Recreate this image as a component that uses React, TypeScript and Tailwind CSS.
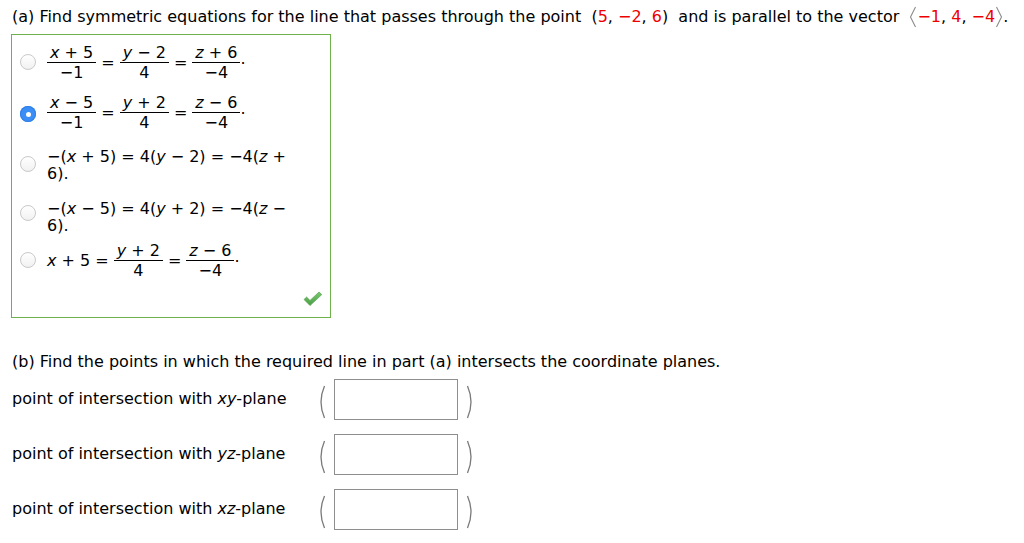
import React from "react";

const I = ({ children }: { children: React.ReactNode }) => (
  <span className="italic">{children}</span>
);

const R = ({ children }: { children: React.ReactNode }) => (
  <span className="text-[#ee0000]">{children}</span>
);

const Frac = ({ n, d }: { n: React.ReactNode; d: React.ReactNode }) => (
  <span className="inline-flex flex-col items-center">
    <span className="px-[3px] leading-[18px] border-b border-black whitespace-pre">{n}</span>
    <span className="px-[3px] leading-[20px] whitespace-pre">{d}</span>
  </span>
);

const Eq = () => <span className="px-[5px] leading-[18px] mb-[1px]">=</span>;

const Dot = () => <span className="leading-[18px] mb-[9px]">.</span>;

const Radio = ({ checked, className = "" }: { checked?: boolean; className?: string }) =>
  checked ? (
    <span
      className={`w-[16px] h-[16px] rounded-full bg-[#3a8ef5] flex items-center justify-center shrink-0 shadow-[inset_0_0_0_1px_#2f7fe6] ${className}`}
    >
      <span className="w-[5px] h-[5px] rounded-full bg-white" />
    </span>
  ) : (
    <span
      className={`w-[16px] h-[16px] rounded-full border border-[#c9c9c9] bg-gradient-to-b from-white to-[#f1f1f1] shrink-0 ${className}`}
    />
  );

const Angle = ({ right }: { right?: boolean }) => (
  <svg width="8" height="22" viewBox="0 0 8 22" className="inline-block align-middle">
    <path
      d={right ? "M1.5 1 L6.5 11 L1.5 21" : "M6.5 1 L1.5 11 L6.5 21"}
      fill="none"
      stroke="#8a8a8a"
      strokeWidth="1.1"
    />
  </svg>
);

const Paren = ({ right }: { right?: boolean }) => (
  <svg width="9" height="34" viewBox="0 0 9 34" className="shrink-0 mt-[4px]">
    <path
      d={right ? "M1.5 1 Q8.5 17 1.5 33" : "M7.5 1 Q0.5 17 7.5 33"}
      fill="none"
      stroke="#7a7a7a"
      strokeWidth="1.3"
    />
  </svg>
);

const Row = ({ label, className }: { label: React.ReactNode; className: string }) => (
  <div className={`flex items-center h-[41px] ${className}`}>
    <div className="w-[306px] pl-px whitespace-nowrap mb-[1px]">point of intersection with {label}-plane</div>
    <Paren />
    <div className="ml-[8px] w-[124px] h-[41px] border border-[#8e8e8e] bg-white" />
    <div className="ml-[8px]">
      <Paren right />
    </div>
  </div>
);

export default function App() {
  return (
    <div className="w-[1024px] h-[543px] bg-white text-black font-['DejaVu_Sans',sans-serif] text-[16px] pl-[11px] pt-[6px] overflow-hidden">
      <p className="pl-px leading-[20px] whitespace-pre">
        (a) Find symmetric equations for the line that passes through the point  (<R>5</R>, <R>−2</R>, <R>6</R>)  and is parallel to the vector  <Angle /><R>−1</R>, <R>4</R>, <R>−4</R><Angle right />.
      </p>

      <div className="relative mt-[6px] w-[320px] h-[284px] border border-[#6fb24b] pl-[8px]">
        <div className="flex items-start mt-[9px]">
          <Radio className="mt-[10px]" />
          <span className="ml-[11px] flex items-center">
            <Frac n={<><I>x</I> + 5</>} d="−1" />
            <Eq />
            <Frac n={<><I>y</I> − 2</>} d="4" />
            <Eq />
            <Frac n={<><I>z</I> + 6</>} d="−4" />
            <Dot />
          </span>
        </div>

        <div className="flex items-start mt-[11px]">
          <Radio checked className="mt-[12px]" />
          <span className="ml-[11px] flex items-center">
            <Frac n={<><I>x</I> − 5</>} d="−1" />
            <Eq />
            <Frac n={<><I>y</I> + 2</>} d="4" />
            <Eq />
            <Frac n={<><I>z</I> − 6</>} d="−4" />
            <Dot />
          </span>
        </div>

        <div className="flex items-start mt-[15px]">
          <Radio className="mt-[8px]" />
          <span className="ml-[11px] leading-[17px] whitespace-pre">
            −(<I>x</I> + 5) = 4(<I>y</I> − 2) = −4(<I>z</I> +
            <br />
            6).
          </span>
        </div>

        <div className="flex items-start mt-[18px]">
          <Radio className="mt-[5px]" />
          <span className="ml-[11px] leading-[17px] whitespace-pre">
            −(<I>x</I> − 5) = 4(<I>y</I> + 2) = −4(<I>z</I> −
            <br />
            6).
          </span>
        </div>

        <div className="flex items-start mt-[8px]">
          <Radio className="mt-[10px]" />
          <span className="ml-[11px] flex items-center whitespace-pre">
            <span className="leading-[18px] mb-[1px]"><I>x</I> + 5</span>
            <Eq />
            <Frac n={<><I>y</I> + 2</>} d="4" />
            <Eq />
            <Frac n={<><I>z</I> − 6</>} d="−4" />
            <Dot />
          </span>
        </div>

        <svg
          width="20"
          height="16"
          viewBox="0 0 20 16"
          className="absolute right-[7px] bottom-[10px]"
        >
          <defs>
            <linearGradient id="ck" x1="0" y1="0" x2="0" y2="1">
              <stop offset="0" stopColor="#79c86e" />
              <stop offset="1" stopColor="#4a9e45" />
            </linearGradient>
          </defs>
          <path
            d="M1 8.5 L3.6 6 L7 9.4 L16 1 L18.8 3.6 L7 14.6 Z"
            fill="url(#ck)"
            stroke="#4a9a44"
            strokeWidth="0.6"
            strokeLinejoin="round"
          />
        </svg>
      </div>

      <p className="pl-px mt-[34px] leading-[20px]">
        (b) Find the points in which the required line in part (a) intersects the coordinate planes.
      </p>

      <Row label={<I>xy</I>} className="mt-[7px]" />
      <Row label={<I>yz</I>} className="mt-[14px]" />
      <Row label={<I>xz</I>} className="mt-[14px]" />
    </div>
  );
}
